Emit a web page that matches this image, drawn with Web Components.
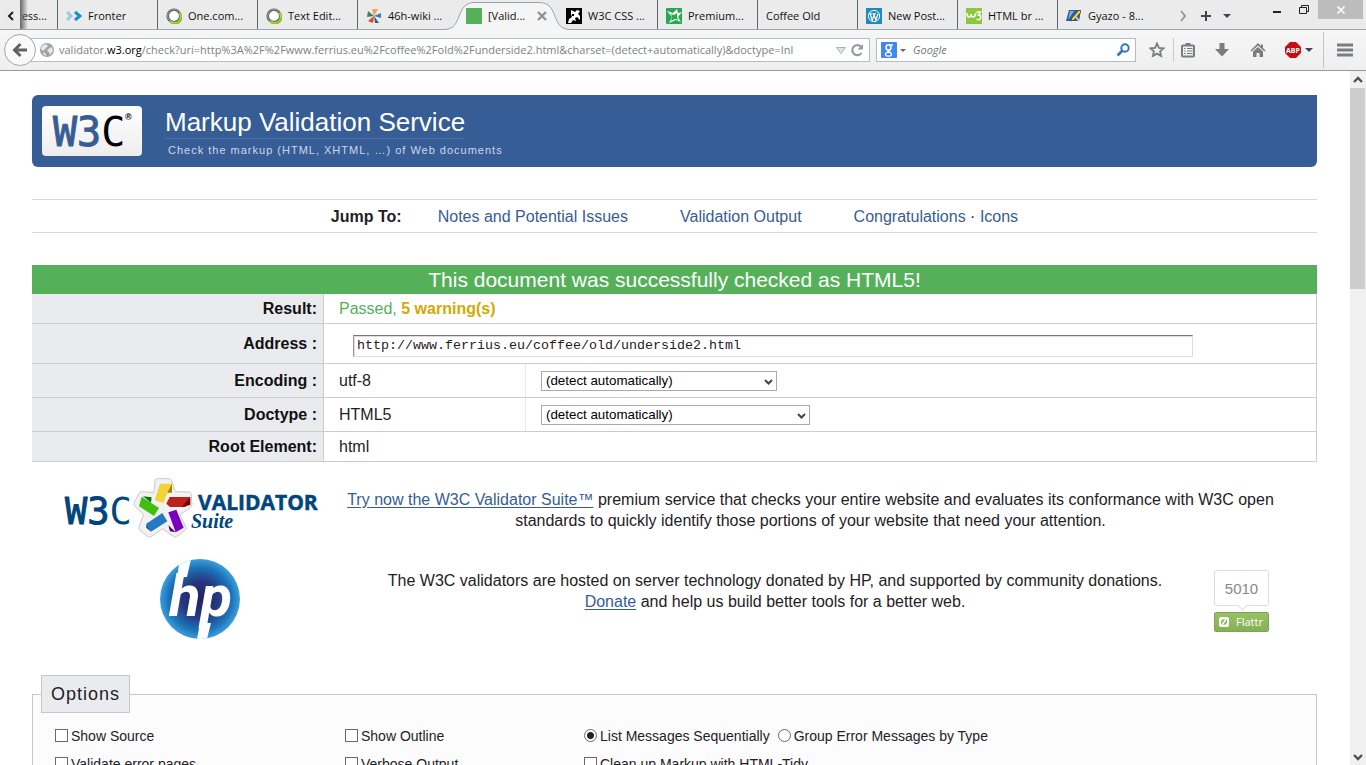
<!DOCTYPE html>
<html lang="en">
<head>
<meta charset="utf-8">
<title>[Valid] Markup Validation Service</title>
<style>
  html, body { height: 100%; }
  body { margin: 0; overflow: hidden; background: #fff; color: #1f2126; font-family: "Liberation Sans", Arial, sans-serif; }
</style>
</head>
<body>
<browser-window>
  <tab-strip slot="tabs">
    <browser-tab cut>cess...</browser-tab>
    <browser-tab icon="fronter">Fronter</browser-tab>
    <browser-tab icon="one">One.com...</browser-tab>
    <browser-tab icon="one">Text Edit...</browser-tab>
    <browser-tab icon="wiki" last>46h-wiki ...</browser-tab>
    <browser-tab icon="valid" active>[Valid...</browser-tab>
    <browser-tab icon="css">W3C CSS ...</browser-tab>
    <browser-tab icon="premium">Premium...</browser-tab>
    <browser-tab>Coffee Old</browser-tab>
    <browser-tab icon="wordpress">New Post...</browser-tab>
    <browser-tab icon="w3s">HTML br ...</browser-tab>
    <browser-tab icon="gyazo" last>Gyazo - 8...</browser-tab>
  </tab-strip>
  <nav-toolbar slot="toolbar"></nav-toolbar>
  <service-header>Markup Validation Service<span slot="tagline">Check the markup (HTML, XHTML, …) of Web documents</span></service-header>
  <jump-nav></jump-nav>
  <result-table></result-table>
  <sponsor-row>
    <suite-logo slot="logo"></suite-logo>
    <promo-link href="#suite">Try now the W3C Validator Suite™</promo-link> premium service that checks your entire website and evaluates its conformance with W3C open standards to quickly identify those portions of your website that need your attention.
  </sponsor-row>
  <sponsor-row>
    <hp-logo slot="logo"></hp-logo>
    The W3C validators are hosted on server technology donated by HP, and supported by community donations.<br>
    <promo-link href="#donate">Donate</promo-link> and help us build better tools for a better web.
    <flattr-badge slot="aside"></flattr-badge>
  </sponsor-row>
  <options-panel></options-panel>
</browser-window>

<script>
const define = (name, html, setup) => {
  const template = document.createElement('template');
  template.innerHTML = html;
  customElements.define(name, class extends HTMLElement {
    connectedCallback() {
      if (this.shadowRoot) return;
      this.attachShadow({ mode: 'open' }).append(template.content.cloneNode(true));
      if (setup) setup.call(this, this.shadowRoot);
    }
  });
};

const icons = {
  fronter: '<path d="M1 4l4 4-4 4" fill="none" stroke="#9cc9e8" stroke-width="3"/><path d="M9 4l5 4-5 4" fill="none" stroke="#1590cf" stroke-width="3"/>',
  one: '<circle cx="8" cy="8" r="6.3" fill="#fff" stroke="#555" stroke-width="2.6"/><path d="M13.800 5A6.300 6.300 0 0 1 4 13" fill="none" stroke="#84cc16" stroke-width="2.600"/><circle cx="8" cy="8" r="6.400" fill="none" stroke="#ddd" stroke-width=".6"/>',
  wiki: '<path d="M8 8L6 1l6 0z" fill="#f0a060"/><path d="M8 8l7-3v5z" fill="#3f7cac"/><path d="M8 8l5 7H9z" fill="#2d5f8a"/><path d="M8 8l-1 7-5-2z" fill="#d9482b"/><path d="M8 8L1 9l1-6z" fill="#3c7f68"/>',
  valid: '<path d="M0 0h16v16H0z" fill="#55b05a"/>',
  css: '<path d="M0 0h16v16H0z" fill="#000"/><path d="M5 2l4 2 2-2 3 1-2 3 2 2v4l-3-3-2 1 1 3-3-1-2 3H2l1-4 3-2-1-3z" fill="#fff"/><path d="M6 6h2v2H6z" fill="#000"/>',
  premium: '<rect width="16" height="16" rx="1" fill="#2aa84f"/><path d="M1 3l6 2 4-4 1 4 4-1-4 5 3 5-5-2-7 3 3-6z" fill="#fff"/><path d="M5 6l3 1 3-2v4l1 3-3-1-4 2 1-4z" fill="#2aa84f"/>',
  wordpress: '<path d="M0 0h16v16H0z" fill="#1e8cbe"/><circle cx="8" cy="8" r="5.600" fill="none" stroke="#fff"/><path d="M4 6l2.300 6L8 7l1.800 5L12 6M3.500 5.800h3M7 5.800h3" fill="none" stroke="#fff" stroke-width="1.200"/>',
  w3s: '<path d="M0 0h16v16H0z" fill="#8dc63f"/><path d="M1 5q0 4 2 4t2-3q0 3 2 3t3-4M10.500 4h4l-2 3q3 0 2 3t-4 1" fill="none" stroke="#fff" stroke-width="1.500"/>',
  gyazo: '<path d="M3 2h12l-2 11H0z" fill="#2c5b9b"/><path d="M4 3l-2 9 6-9z" fill="#79b7df"/><path d="M13 2l2 2-7 8-3 1 1-3z" fill="#f2d633" stroke="#333" stroke-width=".6"/><path d="M10 9l3 4" stroke="#cdd" stroke-width="1.500"/>',
  left: '<path d="M11 4L7 8l4 4" fill="none" stroke="#222" stroke-width="2"/>',
  right: '<path d="M6 3l4 5-4 5" fill="none" stroke="#999" stroke-width="2"/>',
  plus: '<path d="M9 3v10M4 8h10" stroke="#3c4654" stroke-width="2"/>',
  caret: '<path d="M4 6h8l-4 4z" fill="#3c4654"/>',
  close: '<path d="M4 4l8 8M12 4l-8 8" stroke="#8a929c" stroke-width="2.400"/>',
  min: '<path d="M5 10h8" stroke="#222" stroke-width="2"/>',
  restore: '<path d="M3.500 5.500h7v6h-7zM5.500 5V3.500h7v6H11" fill="none" stroke="#222"/>',
  cross: '<path d="M4.500 4.500l7 7M11.500 4.500l-7 7" stroke="#fff" stroke-width="1.600"/>',
  back: '<path d="M8.500 2L2.500 8l6 6M3 8h12" fill="none" stroke="#5f6467" stroke-width="3"/>',
  globe: '<circle cx="8" cy="8" r="7" fill="#a2a2a2"/><path d="M3 4l4-2 2 2-2 2-3 3-2-2zM9 7l4-2 1 4-3 4-1-3-2-1zM5 10l2 2v2l-3-2z" fill="#e8e8e8"/>',
  drop: '<path d="M3.500 5.500h9l-4.500 6z" fill="#dfe3e8" stroke="#aab2bb"/>',
  reload: '<path d="M12 4.800A5 5 0 1 0 12.500 11" fill="none" stroke="#929aa5" stroke-width="2.200"/><path d="M8.500 7.500H14V2z" fill="#929aa5"/>',
  google: '<rect width="16" height="16" rx="1" fill="#4285f4"/><ellipse cx="7.500" cy="5.500" rx="2.400" ry="2.800" fill="none" stroke="#fff" stroke-width="1.600"/><path d="M8 3h4M8.500 8.500L7 9.500l3 1" fill="none" stroke="#fff" stroke-width="1.300"/><ellipse cx="7.500" cy="12.300" rx="3" ry="1.900" fill="none" stroke="#fff" stroke-width="1.300"/>',
  search: '<circle cx="10" cy="6" r="3.700" fill="none" stroke="#3277b5" stroke-width="2"/><path d="M7.500 8.500L2.500 13.500" stroke="#3277b5" stroke-width="2.600"/>',
  star: '<path d="M8 1.500l1.900 4.300 4.700.5-3.500 3.100 1 4.600L8 11.600 3.900 14l1-4.600L1.400 6.300l4.700-.5z" fill="none" stroke="#797c80" stroke-width="1.800"/>',
  list: '<rect x="2" y="3.500" width="12" height="11" rx="1" fill="none" stroke="#797c80" stroke-width="2"/><path d="M5.500 1h5v2.500h-5z" fill="#797c80"/><path d="M4 6.500h1.500M7 6.500h5.500M4 9h1.500M7 9h5.500M4 11.500h1.500M7 11.500h5.500" stroke="#797c80" stroke-width="1"/>',
  down: '<path d="M5.500 1h5v6h4.500L8 14.500 1 7h4.500z" fill="#797c80"/>',
  home: '<path d="M8 1L0.500 8.500l1 1L8 3.500l6.500 6 1-1L13 6V2.500h-2V4zM3 9.500l5-4.500 5 4.500V15H9.500v-4h-3v4H3z" fill="#797c80"/>',
  abp: '<path d="M5 0h6l5 5v6l-5 5H5l-5-5V5z" fill="#c70d12"/><text x="8" y="11" text-anchor="middle" font-family="Open Sans, sans-serif" font-weight="700" font-size="7" fill="#fff">ABP</text>',
  menu: '<path d="M0 3h16M0 8h16M0 13h16" stroke="#7a7d80" stroke-width="3"/>',
  up: '<path d="M4 11l4-4 4 4" fill="none" stroke="#505050" stroke-width="2.400"/>',
  dn: '<path d="M4 7l4 4 4-4" fill="none" stroke="#505050" stroke-width="2.400"/>',
  flattr: '<rect x="3" y="3" width="10" height="10" rx="2" fill="#fff"/><path d="M5 11V8q0-3 4-3l-4 6M11 5v3q0 3-4 3l4-6" fill="#8bb85a"/>'
};

define('ui-icon', `<style>
  :host { display: block; flex: none; width: 16px; height: 16px; }
  svg { display: block; }
</style>`, function (root) {
  root.innerHTML += `<svg width="16" height="16" viewBox="0 0 16 16" aria-hidden="true">${icons[this.getAttribute('name')]}</svg>`;
});

define('browser-tab', `<style>
  :host { display: flex; position: relative; flex: none; box-sizing: border-box; width: 100px; height: 29px; padding: 3px 0 0 8px; align-items: center; gap: 6px; border-right: 1px solid #5f676e; color: #111; font: 11px/16px "Open Sans", sans-serif; white-space: nowrap; }
  :host([cut]) { width: 38px; justify-content: flex-end; padding: 3px 10px 0 0; overflow: hidden; }
  :host([cut])::before { content: ""; position: absolute; left: 0; top: 0; width: 8px; height: 29px; background: linear-gradient(90deg, #666, #ebebeb00); }
  :host([last]), :host([active]) { border-right-color: transparent; }
  :host([active]) { z-index: 1; }
  .shape { position: absolute; z-index: -1; left: -14px; top: 0; }
  button { margin: 0 7px 0 auto; padding: 0; border: 0; background: none; }
</style><slot></slot>`, function (root) {
  const slot = root.querySelector('slot');
  const icon = this.getAttribute('icon');
  if (icon) slot.insertAdjacentHTML('beforebegin', `<ui-icon name="${icon}"></ui-icon>`);
  if (this.hasAttribute('active')) {
    slot.insertAdjacentHTML('afterend', '<button aria-label="Close tab"><ui-icon name="close"></ui-icon></button><svg class="shape" width="126" height="30" aria-hidden="true"><path d="M0 30V29.500C20 29.500 10 2.500 31 2.500H95C116 2.500 106 29.500 126 29.500V30z" fill="#f5f5f5"/><path d="M0 29.500C20 29.500 10 2.500 31 2.500H95C116 2.500 106 29.500 126 29.500" fill="none" stroke="#9aa3ab"/></svg>');
  }
});

define('tab-strip', `<style>
  :host { display: flex; height: 29px; background: #ebebeb; border-bottom: 1px solid #9aa7b0; }
  .tabs { flex: 1; display: flex; min-width: 0; }
  button { display: grid; place-items: center; flex: none; width: 22px; height: 31px; padding: 0; border: 0; background: none; }
  .first { width: 20px; }
  .win { width: 28px; height: 20px; }
  .win.space { margin-left: 24px; }
  .x { width: 45px; height: 19px; margin: 0 3px 0 0; background: #bcbcbc; }
</style>
<button class="first" aria-label="Scroll tabs left"><ui-icon name="left"></ui-icon></button>
<div class="tabs"><slot></slot></div>
<button aria-label="Scroll tabs right"><ui-icon name="right"></ui-icon></button>
<button aria-label="New tab"><ui-icon name="plus"></ui-icon></button>
<button aria-label="List tabs"><ui-icon name="caret"></ui-icon></button>
<button class="win space" aria-label="Minimise"><ui-icon name="min"></ui-icon></button>
<button class="win" aria-label="Restore"><ui-icon name="restore"></ui-icon></button>
<button class="x" aria-label="Close window"><ui-icon name="cross"></ui-icon></button>`);

define('nav-toolbar', `<style>
  :host { display: flex; align-items: center; height: 40px; border-bottom: 1px solid #999; background: linear-gradient(#f6f6f6, #efefef); font: 11px/16px "Open Sans", sans-serif; color: #808080; }
  button { display: grid; grid-auto-flow: column; place-content: center; flex: none; padding: 0; border: 0; background: none; height: 24px; }
  .back { z-index: 1; width: 32px; height: 32px; margin-left: 4px; border: 1px solid #a5a5a5; border-radius: 50%; background: #fafafa; box-sizing: border-box; }
  .field { display: flex; align-items: center; box-sizing: border-box; height: 24px; border: 1px solid #b4bdc6; background: #fff; }
  .url { flex: 1; min-width: 0; margin-left: -6px; padding: 0 4px 0 8px; }
  .text { flex: 1; min-width: 0; margin: 0 4px; overflow: hidden; white-space: nowrap; }
  b { font-weight: 400; color: #000; }
  .search { width: 260px; margin-left: 6px; padding: 0 4px; }
  input { flex: 1; min-width: 0; border: 0; padding: 0 4px; outline: 0; background: none; font: italic 11px/16px "Open Sans", sans-serif; }
  input::placeholder { color: #777; opacity: 1; }
  .narrow { width: 12px; }
  .mark { width: 34px; margin-left: 4px; border-right: 1px solid #ccc; }
  .w28 { width: 28px; } .w40 { width: 40px; } .w32 { width: 32px; }
  .abp { width: 49px; padding-left: 4px; }
  .menu { width: 43px; height: 36px; border-left: 1px solid #c4c4c4; }
</style>
<button class="back" aria-label="Back"><ui-icon name="back"></ui-icon></button>
<div class="field url"><ui-icon name="globe"></ui-icon><div class="text">validator.<b>w3.org</b>/check?uri=http%3A%2F%2Fwww.ferrius.eu%2Fcoffee%2Fold%2Funderside2.html&amp;charset=(detect+automatically)&amp;doctype=Inl</div><button aria-label="History"><ui-icon name="drop"></ui-icon></button><button aria-label="Reload"><ui-icon name="reload"></ui-icon></button></div>
<div class="field search"><ui-icon name="google"></ui-icon><button class="narrow" aria-label="Search engine"><svg width="6" height="3"><path d="M0 0h6L3 3z" fill="#666"/></svg></button><input type="text" aria-label="Search" placeholder="Google"><button aria-label="Go"><ui-icon name="search"></ui-icon></button></div>
<button class="mark" aria-label="Bookmark"><ui-icon name="star"></ui-icon></button>
<button class="w28" aria-label="Bookmarks list"><ui-icon name="list"></ui-icon></button>
<button class="w40" aria-label="Downloads"><ui-icon name="down"></ui-icon></button>
<button class="w32" aria-label="Home"><ui-icon name="home"></ui-icon></button>
<button class="abp" aria-label="Adblock"><ui-icon name="abp"></ui-icon><ui-icon name="caret"></ui-icon></button>
<button class="menu" aria-label="Menu"><ui-icon name="menu"></ui-icon></button>`);

define('scroll-bar', `<style>
  :host { display: flex; flex-direction: column; flex: none; width: 16px; background: #f0f0f0; }
  ui-icon { height: 17px; }
  .track { flex: 1; }
  .thumb { width: 15px; height: 30.5%; background: #cdcdcd; }
</style><ui-icon name="up"></ui-icon><div class="track"><div class="thumb"></div></div><ui-icon name="dn"></ui-icon>`);

define('browser-window', `<style>
  :host { display: flex; flex-direction: column; height: 100vh; }
  .view { flex: 1; min-height: 0; display: flex; }
  main { flex: 1; min-width: 0; overflow: hidden; padding: 24px 33px 0 32px; }
</style>
<slot name="tabs"></slot><slot name="toolbar"></slot>
<div class="view"><main><slot></slot></main><scroll-bar></scroll-bar></div>`);

define('service-header', `<style>
  :host { display: flex; box-sizing: border-box; height: 72px; padding: 11px 10px 0; gap: 23px; border-radius: 6px 0 6px 6px; background: #365d95; color: #fff; }
  .badge { flex: none; width: 100px; height: 50px; border-radius: 4px; background: linear-gradient(#fff, #ededed); }
  h1 { width: fit-content; margin: 0; border-bottom: 1px solid #4d70a2; font: 26px/32px "Liberation Sans", Arial, sans-serif; }
  p { margin: 3px 0 0 3px; font: 11px/16px "Liberation Sans", Arial, sans-serif; letter-spacing: 1px; color: #ccd8e8; }
</style>
<svg class="badge" viewBox="0 0 100 50" role="img" aria-label="W3C">
  <text x="11" y="40" font-family="DejaVu Sans Mono, monospace" font-size="40" fill="#365d95" stroke="#365d95">W3<tspan fill="#000" stroke="none">C</tspan></text>
  <text x="83" y="14" font-family="Liberation Sans, sans-serif" font-size="9" font-weight="700" fill="#000">®</text>
</svg>
<div><h1><slot></slot></h1><p><slot name="tagline"></slot></p></div>`);

define('jump-nav', `<style>
  :host { display: block; margin: 32px 0; padding-top: 2px; border: solid #d9d9d9; border-width: 1px 0; font-size: 16px; line-height: 30px; }
  nav { display: flex; justify-content: center; gap: 36px; }
  ul { display: flex; gap: 52px; margin: 0; padding: 0; list-style: none; }
  a { color: #365d95; text-decoration: none; }
</style>
<nav><strong>Jump To:</strong><ul><li><a href="#notes">Notes and Potential Issues</a></li><li><a href="#output">Validation Output</a></li><li><a href="#congrats">Congratulations</a> · <a href="#icons">Icons</a></li></ul></nav>`);

define('select-box', `<style>
  :host { display: block; position: relative; width: var(--w); }
  select { display: block; appearance: none; box-sizing: border-box; width: 100%; height: 20px; margin: 0; padding: 0 4px; border: 1px solid #ababab; border-radius: 0; background: #fff; color: #000; font-family: "Liberation Sans", Arial, sans-serif; }
  svg { position: absolute; right: 4px; top: 8px; pointer-events: none; }
</style>
<select><option>(detect automatically)</option></select><svg width="9" height="6"><path d="M1 1l3.500 3.500L8 1" fill="none" stroke="#444" stroke-width="2"/></svg>`, function (root) {
  root.querySelector('select').setAttribute('aria-label', this.getAttribute('label'));
});

define('result-table', `<style>
  :host { display: block; }
  table { width: 100%; table-layout: fixed; border-collapse: separate; border-spacing: 0; font-size: 16px; line-height: 20px; }
  col.name { width: 292px; } col.value { width: 202px; }
  caption { height: 29px; background: #55b05a; color: #fff; font-size: 21px; line-height: 29px; }
  th, td { box-sizing: border-box; height: 34px; padding: 0; border-bottom: 1px solid #ccc; border-right: 1px solid #ccc; }
  th { padding-right: 6px; text-align: right; background: #eaebee; color: #111; }
  td { padding-left: 15px; text-align: left; }
  .low > * { height: 30px; }
  .tall > * { height: 40px; }
  .part { border-right-color: #e8e8e8; }
  .ok { color: #55b05a; }
  .warn { color: #d4a900; }
  input { display: block; box-sizing: border-box; width: calc(100% - 137px); height: 22px; margin: 5px 0 0 14px; padding: 0 3px 1px; border: 1px solid; border-color: #777 #ddd #ddd #999; box-shadow: inset 1px 1px #ddd; border-radius: 0; font-family: "Liberation Mono", "Courier New", monospace; color: #1f2126; }
</style>
<table>
  <caption>This document was successfully checked as HTML5!</caption>
  <colgroup><col class="name"><col class="value"><col></colgroup>
  <tr class="low"><th scope="row">Result:</th><td colspan="2"><span class="ok">Passed, </span><b class="warn">5 warning(s)</b></td></tr>
  <tr class="tall"><th scope="row"><label for="uri">Address :</label></th><td colspan="2"><input id="uri" type="text" value="http://www.ferrius.eu/coffee/old/underside2.html"></td></tr>
  <tr><th scope="row">Encoding :</th><td class="part">utf-8</td><td><select-box label="Encoding" style="--w:236px"></select-box></td></tr>
  <tr><th scope="row">Doctype :</th><td class="part">HTML5</td><td><select-box label="Doctype" style="--w:269px"></select-box></td></tr>
  <tr class="low"><th scope="row">Root Element:</th><td colspan="2">html</td></tr>
</table>`);

define('promo-link', `<style>
  :host { display: inline; }
  a { color: #365d95; text-decoration: underline; text-underline-offset: 2px; }
</style><a><slot></slot></a>`, function (root) {
  root.querySelector('a').href = this.getAttribute('href');
});

define('sponsor-row', `<style>
  :host { display: flex; margin-top: 16px; padding: 0 32px; min-height: 65px; font-size: 16px; line-height: 21px; }
  .logo { flex: none; width: 272px; }
  p { flex: 1; min-width: 0; margin: 11px 0 0; text-align: center; }
</style><div class="logo"><slot name="logo"></slot></div><p><slot></slot></p><slot name="aside"></slot>`);

define('suite-logo', `<style>:host { display: block; } svg { display: block; }</style>
<svg width="260" height="62" viewBox="64 478 260 62" role="img" aria-label="W3C Validator Suite">
  <text x="65" y="524" font-family="DejaVu Sans Mono, monospace" font-size="37" fill="#00457e" stroke="#00457e">W3<tspan stroke="none">C</tspan></text>
  <svg x="61" y="475" width="140" height="68" viewBox="0 0 420 204">
    <path d="M283 14q3-3 7-3h34q5 0 7 4l12 35 40 1q5 0 7 4l3 34q0 5-4 8l-32 22 18 38q2 5-2 8l-26 20q-4 3-8 0l-35-24-34 24q-5 3-9 0l-25-20q-4-3-2-8l14-39-27-25q-3-4-2-8l16-32q2-4 7-3l36 3z" fill="#f2f2f2" stroke="#c9c9c9" stroke-width="3"/>
    <path d="M297 26h36v27h-14l-12 31-26-8z" fill="#f1d43c"/><path d="M333 26v27h-14z" fill="#bb7a00"/>
    <path d="M326 66h62l-14 30h-47l-11-10z" fill="#bd211b"/><path d="M388 66v24l-26 6z" fill="#7a0000"/>
    <path d="M322 112l24-8 22 54-24 14-8-22z" fill="#7b00bd"/><path d="M322 151l22 21-17-3z" fill="#490072"/>
    <path d="M304 114l15 25-49 31-14-24z" fill="#2478c4"/><path d="M256 146l14 24-14-12z" fill="#00457e"/>
    <path d="M242 65l52 34-15 24-45-29z" fill="#3fc00f"/><path d="M246 64l26 3-2 16z" fill="#087518"/>
  </svg>
  <text x="198" y="510" font-family="Open Sans, sans-serif" font-weight="700" font-size="21" fill="#00457e" stroke="#00457e" stroke-width=".5">VALIDATOR</text>
  <text x="191" y="528" font-family="Liberation Serif, serif" font-weight="700" font-style="italic" font-size="20" fill="#00457e">Suite</text>
</svg>`);

define('hp-logo', `<style>:host { display: block; width: 80px; margin-left: 96px; } svg { display: block; }</style>
<svg width="80" height="80" viewBox="0 0 80 80" role="img" aria-label="hp">
  <defs><radialGradient id="g"><stop offset="0" stop-color="#24215f"/><stop offset=".45" stop-color="#26377f"/><stop offset=".8" stop-color="#1c75bb"/><stop offset="1" stop-color="#3d9fdb"/></radialGradient><clipPath id="c"><circle cx="40" cy="40" r="40"/></clipPath></defs>
  <circle cx="40" cy="40" r="40" fill="url(#g)"/>
  <g clip-path="url(#c)" fill="#fff"><path d="M20 0h11L27 18H17zM40 64h11L47 80H37z"/></g>
  <text x="9" y="57" font-family="Roboto, sans-serif" font-size="58" font-weight="700" font-style="italic" fill="#fff">hp</text>
</svg>`);

define('flattr-badge', `<style>
  :host { display: block; width: 55px; margin: 11px 16px 0 0; }
  .count { position: relative; box-sizing: border-box; height: 36px; margin-bottom: 6px; border: 1px solid #ddd; border-radius: 3px; font-size: 15px; line-height: 36px; text-align: center; color: #888; }
  .count::after { content: ""; position: absolute; left: 24px; bottom: -4px; width: 6px; height: 6px; border: solid #ddd; border-width: 0 1px 1px 0; background: #fff; transform: rotate(45deg); }
  button { display: flex; align-items: center; gap: 4px; box-sizing: border-box; width: 100%; height: 20px; padding: 0; border: 1px solid #7ba84c; border-radius: 2px; background: linear-gradient(#97c165, #85b154); color: #fff; font: 11px/16px "Open Sans", sans-serif; }
  ui-icon { margin-left: 1px; }
</style><div class="count">5010</div><button><ui-icon name="flattr"></ui-icon>Flattr</button>`);

define('options-panel', `<style>
  :host { display: block; margin-top: 36px; }
  fieldset { min-width: 0; height: 220px; box-sizing: border-box; margin: 0; padding: 0 8px; border: 1px solid #c8c8c8; background: #fcfcfc; }
  legend { box-sizing: border-box; height: 38px; padding: 0 9px; border: 1px solid #c8c8c8; background: #eaebee; font-size: 18px; line-height: 36px; letter-spacing: 1px; color: #1f2126; }
  .grid { display: grid; grid-template-columns: 290px 239px 1fr; grid-auto-rows: 28px; align-items: center; padding: 9px 14px 0; font-size: 14px; line-height: 28px; white-space: nowrap; }
  .pair { display: flex; gap: 8px; }
  label { display: flex; align-items: center; gap: 3px; }
  input { appearance: none; box-sizing: border-box; flex: none; width: 13px; height: 13px; margin: 0 0 2px; border: 1px solid #6a6a6a; background: #fff; }
  input[type=radio] { border-radius: 50%; }
  input[type=radio]:checked { background: radial-gradient(circle, #222 3px, #fff 4px); }
</style>
<fieldset><legend>Options</legend><div class="grid">
  <label><input type="checkbox">Show Source</label><label><input type="checkbox">Show Outline</label>
  <div class="pair"><label><input type="radio" name="group" checked>List Messages Sequentially</label><label><input type="radio" name="group">Group Error Messages by Type</label></div>
  <label><input type="checkbox">Validate error pages</label><label><input type="checkbox">Verbose Output</label><label><input type="checkbox">Clean up Markup with HTML-Tidy</label>
</div></fieldset>`);
</script>
</body>
</html>
